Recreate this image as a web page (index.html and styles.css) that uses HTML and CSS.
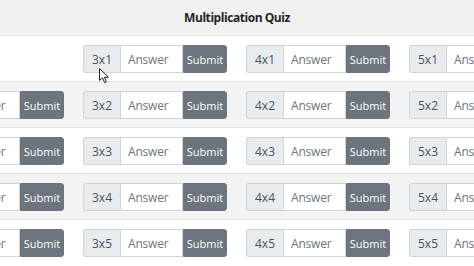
FILE: index.html
```html
<!DOCTYPE html>
<html>
<head>
<meta charset="utf-8">
<link rel="stylesheet" href="styles.css">
</head>
<body>
<div class="quiz">
  <div class="quiz-title">Multiplication Quiz</div>

  <div class="quiz-row">
    <div class="group-empty"></div>
    <div class="group"><span class="addon">3x1</span><input class="answer" placeholder="Answer"><button class="submit">Submit</button></div>
    <div class="group"><span class="addon">4x1</span><input class="answer" placeholder="Answer"><button class="submit">Submit</button></div>
    <div class="group"><span class="addon">5x1</span><input class="answer" placeholder="Answer"><button class="submit">Submit</button></div>
  </div>

  <div class="quiz-row striped">
    <div class="group"><span class="addon">2x2</span><input class="answer" placeholder="Answer"><button class="submit">Submit</button></div>
    <div class="group"><span class="addon">3x2</span><input class="answer" placeholder="Answer"><button class="submit">Submit</button></div>
    <div class="group"><span class="addon">4x2</span><input class="answer" placeholder="Answer"><button class="submit">Submit</button></div>
    <div class="group"><span class="addon">5x2</span><input class="answer" placeholder="Answer"><button class="submit">Submit</button></div>
  </div>

  <div class="quiz-row">
    <div class="group"><span class="addon">2x3</span><input class="answer" placeholder="Answer"><button class="submit">Submit</button></div>
    <div class="group"><span class="addon">3x3</span><input class="answer" placeholder="Answer"><button class="submit">Submit</button></div>
    <div class="group"><span class="addon">4x3</span><input class="answer" placeholder="Answer"><button class="submit">Submit</button></div>
    <div class="group"><span class="addon">5x3</span><input class="answer" placeholder="Answer"><button class="submit">Submit</button></div>
  </div>

  <div class="quiz-row striped">
    <div class="group"><span class="addon">2x4</span><input class="answer" placeholder="Answer"><button class="submit">Submit</button></div>
    <div class="group"><span class="addon">3x4</span><input class="answer" placeholder="Answer"><button class="submit">Submit</button></div>
    <div class="group"><span class="addon">4x4</span><input class="answer" placeholder="Answer"><button class="submit">Submit</button></div>
    <div class="group"><span class="addon">5x4</span><input class="answer" placeholder="Answer"><button class="submit">Submit</button></div>
  </div>

  <div class="quiz-row">
    <div class="group"><span class="addon">2x5</span><input class="answer" placeholder="Answer"><button class="submit">Submit</button></div>
    <div class="group"><span class="addon">3x5</span><input class="answer" placeholder="Answer"><button class="submit">Submit</button></div>
    <div class="group"><span class="addon">4x5</span><input class="answer" placeholder="Answer"><button class="submit">Submit</button></div>
    <div class="group"><span class="addon">5x5</span><input class="answer" placeholder="Answer"><button class="submit">Submit</button></div>
  </div>

  <svg class="cursor" width="11" height="16" viewBox="0 0 11 16">
    <path d="M0.5 0.5 L0.5 12.5 L3.5 9.8 L5.6 14.6 L7.4 13.8 L5.4 9.2 L9.4 9.2 Z" fill="#fff" stroke="#222" stroke-width="1" stroke-linejoin="round"/>
  </svg>
</div>
</body>
</html>
```
FILE: styles.css
```css
html, body {
  margin: 0;
  padding: 0;
  background: #fff;
}

body {
  overflow: hidden;
  font-family: "Open Sans", "Noto Sans", "DejaVu Sans", sans-serif;
  font-size: 12px;
  color: #212529;
}

.quiz {
  position: relative;
  width: 474px;
}

.quiz-title {
  height: 35px;
  background: #f1f1f1;
  display: flex;
  align-items: center;
  justify-content: center;
  font-weight: 700;
  font-size: 12px;
  letter-spacing: -0.45px;
  color: #212529;
}

.quiz-row {
  display: flex;
  gap: 19px;
  margin-left: -80px;
  padding: 9px 0 8px;
  border-top: 1px solid #e2e4e6;
}

.quiz-row.striped {
  background: #f3f3f3;
}

.group,
.group-empty {
  flex: none;
  width: 144px;
  height: 28px;
}

.group {
  display: flex;
}

.addon {
  box-sizing: border-box;
  width: 37px;
  display: flex;
  align-items: center;
  justify-content: center;
  background: #e9ecef;
  border: 1px solid #ced4da;
  border-right: 0;
  border-radius: 3px 0 0 3px;
  color: #495057;
}

.answer {
  box-sizing: border-box;
  width: 63px;
  height: 28px;
  margin: 0;
  padding: 0 0 0 7px;
  border: 1px solid #ced4da;
  background: #fff;
  font: inherit;
  letter-spacing: -0.2px;
  color: #495057;
  outline: none;
}

.answer::placeholder {
  color: #6c757d;
  opacity: 1;
}

.submit {
  box-sizing: border-box;
  width: 44px;
  height: 28px;
  margin: 0;
  padding: 0;
  background: #6c757d;
  border: 1px solid #6c757d;
  border-radius: 0 3px 3px 0;
  color: #fff;
  font: inherit;
  font-size: 11px;
}

.cursor {
  position: absolute;
  left: 99px;
  top: 68px;
}
```
